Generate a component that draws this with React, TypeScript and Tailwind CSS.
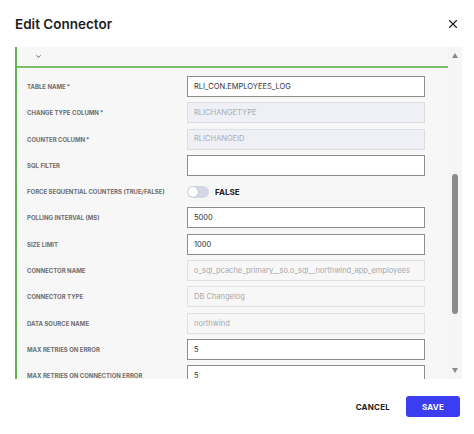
import { X, ChevronDown } from "lucide-react";

type Field = {
  label: string;
  required?: boolean;
  value?: string;
  kind: "input" | "locked" | "readonly" | "toggle";
};

const fields: Field[] = [
  { label: "Table Name", required: true, value: "RLI_CON.EMPLOYEES_LOG", kind: "input" },
  { label: "Change Type Column", required: true, value: "RLICHANGETYPE", kind: "locked" },
  { label: "Counter Column", required: true, value: "RLICHANGEID", kind: "locked" },
  { label: "SQL Filter", value: "", kind: "input" },
  { label: "Force Sequential Counters (True/False)", kind: "toggle" },
  { label: "Polling Interval (ms)", value: "5000", kind: "input" },
  { label: "Size Limit", value: "1000", kind: "input" },
  { label: "Connector Name", value: "o_sql_pcache_primary__so.o_sql__northwind_app_employees", kind: "readonly" },
  { label: "Connector Type", value: "DB Changelog", kind: "readonly" },
  { label: "Data Source Name", value: "northwind", kind: "readonly" },
  { label: "Max Retries on Error", value: "5", kind: "input" },
  { label: "Max Retries on Connection Error", value: "5", kind: "input" },
];

const FieldControl = ({ field }: { field: Field }) => {
  if (field.kind === "toggle") {
    return (
      <div className="flex items-center gap-[6px]">
        <div className="flex h-[12px] w-[22px] items-center rounded-full bg-[#d3d7e2] px-[1px]">
          <div className="h-[10px] w-[10px] rounded-full bg-white shadow-[0_0_1px_rgba(0,0,0,0.3)]" />
        </div>
        <span className="text-[8px] font-bold text-[#222]">FALSE</span>
      </div>
    );
  }
  const styles = {
    input: "border-[#8d8d8d] bg-white text-[#333]",
    locked: "border-[#dcdde3] bg-[#eef0f6] text-[#a9abb3]",
    readonly: "border-[#e1e1e1] bg-[#f7f7f7] text-[#a8a8a8]",
  }[field.kind];
  return (
    <div className={`flex h-[21px] w-[238px] items-center border px-[6px] text-[7.5px] ${styles}`}>
      {field.value}
    </div>
  );
};

const App = () => {
  return (
    <div className="h-[434px] w-[474px] overflow-hidden bg-white font-['Inter','Liberation_Sans',sans-serif]">
      <div className="flex h-[47px] items-center justify-between pl-[15px] pr-[14px] pt-[1px]">
        <h1 className="text-[13.5px] font-semibold text-[#1d1d1d]">Edit Connector</h1>
        <X className="h-[14px] w-[14px] text-[#222]" strokeWidth={2} />
      </div>

      <div className="ml-[15px] mr-[12px] flex h-[332px]">
        <div className="flex-1 overflow-hidden border-l-2 border-[#62b354] bg-[#f7f7f7]">
          <div className="flex h-[21px] items-center border-b-2 border-[#7cc16d] pl-[18px]">
            <ChevronDown className="h-[7px] w-[7px] text-[#555]" strokeWidth={3} />
          </div>
          <div className="pt-[8px]">
            {fields.map((f) => (
              <div key={f.label} className="mb-[5.3px] flex h-[21px] items-center">
                <div className="w-[170px] shrink-0 pl-[10px] text-[6px] font-bold uppercase text-[#6e6e6e]">
                  {f.label}
                  {f.required && <span className="ml-[1px]">*</span>}
                </div>
                <FieldControl field={f} />
              </div>
            ))}
          </div>
        </div>
        <div className="flex w-[14px] flex-col items-center bg-[#f5f5f5] py-[6px]">
          <div className="h-0 w-0 border-x-[3.5px] border-b-[5px] border-x-transparent border-b-[#8a8a8a]" />
          <div className="mt-[116px] h-[140px] w-[6px] rounded-full bg-[#8b8b8b]" />
          <div className="mt-auto h-0 w-0 border-x-[3.5px] border-t-[5px] border-x-transparent border-t-[#8a8a8a]" />
        </div>
      </div>

      <div className="flex items-center justify-end gap-[16px] pr-[14px] pt-[17px]">
        <button className="text-[8px] font-bold tracking-wide text-[#222]">CANCEL</button>
        <button className="h-[21px] w-[54px] rounded-[3px] bg-[#3c3cf0] text-[8px] font-bold tracking-wide text-white">
          SAVE
        </button>
      </div>
    </div>
  );
};

export default App;
